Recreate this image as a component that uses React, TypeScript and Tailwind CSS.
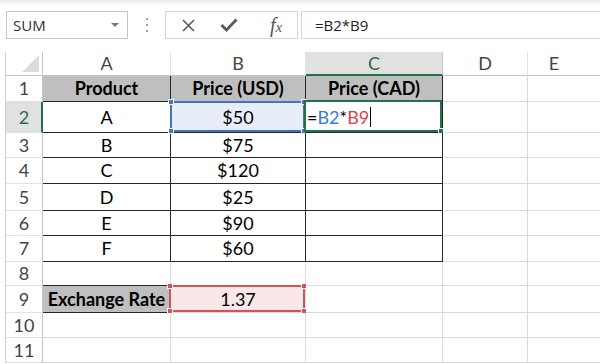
import React from "react";

type RowDef = {
  h: string;
  cells: [React.ReactNode, React.ReactNode, React.ReactNode];
};

function Corner({ color, pos }: { color: string; pos: string }) {
  return <span className={`absolute w-[6px] h-[6px] border border-white ${pos}`} style={{ background: color }} />;
}

function Formula() {
  return (
    <span className="flex items-center h-full pl-[1px] text-[18px] text-black">
      =<span className="text-[#3a78d6]">B2</span>*<span className="text-[#d8434d]">B9</span>
      <span className="ml-[1px] w-px h-[20px] bg-black" />
    </span>
  );
}

const rows: RowDef[] = [
  { h: "h-[26px]", cells: ["Product", "Price (USD)", "Price (CAD)"] },
  { h: "h-[31px]", cells: ["A", "$50", null] },
  { h: "h-[25px]", cells: ["B", "$75", null] },
  { h: "h-[26px]", cells: ["C", "$120", null] },
  { h: "h-[27px]", cells: ["D", "$25", null] },
  { h: "h-[25px]", cells: ["E", "$90", null] },
  { h: "h-[26px]", cells: ["F", "$60", null] },
  { h: "h-[24px]", cells: [null, null, null] },
  { h: "h-[27px]", cells: ["Exchange Rate", "1.37", null] },
  { h: "h-[25px]", cells: [null, null, null] },
  { h: "h-[25px]", cells: [null, null, null] },
];

function Toolbar() {
  return (
    <div className="h-[52px] bg-gradient-to-b from-[#e9e9e9] via-white via-[12%] to-white flex items-start pt-[11px] pl-[6px]">
      <div className="w-[122px] h-[28px] border border-[#c6c6c6] bg-white flex items-center justify-between pl-[6px] pr-[8px] font-['Open_Sans',sans-serif] text-[15px] text-[#333]">
        <span>SUM</span>
        <span className="w-0 h-0 border-l-[4px] border-r-[4px] border-t-[4px] border-l-transparent border-r-transparent border-t-[#777]" />
      </div>
      <div className="w-[37px] h-[28px] flex flex-col items-center justify-center gap-[4px]">
        <span className="w-[2px] h-[2px] bg-[#a0a0a0]" />
        <span className="w-[2px] h-[2px] bg-[#a0a0a0]" />
        <span className="w-[2px] h-[2px] bg-[#a0a0a0]" />
      </div>
      <div className="w-[133px] h-[28px] border border-[#d4d4d4] bg-white flex items-center pl-[16px] gap-[25px]">
        <svg width="13" height="13" viewBox="0 0 13 13">
          <path d="M1 1L12 12M12 1L1 12" stroke="#5a5a5a" strokeWidth="1.6" />
        </svg>
        <svg width="18" height="14" viewBox="0 0 18 14">
          <path d="M1.5 7L6.5 12L16.5 1.5" stroke="#5a5a5a" strokeWidth="2.8" fill="none" />
        </svg>
        <span className="ml-[7px] font-['Liberation_Serif',serif] italic text-[20px] text-[#555] leading-none">
          f<span className="text-[15px]">x</span>
        </span>
      </div>
      <div className="flex-1 ml-[3px] h-[28px] border border-r-0 border-[#d4d4d4] bg-white flex items-center pl-[13px] font-['Open_Sans',sans-serif] text-[15px] text-[#222]">
        =B2*B9
      </div>
    </div>
  );
}

export default function App() {
  return (
    <div className="w-[600px] h-[364px] overflow-hidden bg-white font-['Lato',sans-serif]">
      <Toolbar />
      <div className="ml-[5px] border-l border-[#d0d0d0]">
        {/* column headers */}
        <div className="flex h-[24px] text-[18px] text-[#444]">
          <div className="w-[37px] shrink-0 border-r border-b border-[#c6c6c6] relative">
            <svg className="absolute right-[3px] bottom-[3px]" width="17" height="17" viewBox="0 0 17 17">
              <path d="M17 0V17H0Z" fill="#dcdcdc" />
            </svg>
          </div>
          <div className="w-[128px] shrink-0 border-r border-b border-r-[#e1e1e1] border-b-[#c6c6c6] flex items-center justify-center">A</div>
          <div className="w-[135px] shrink-0 border-r border-b border-r-[#e1e1e1] border-b-[#c6c6c6] flex items-center justify-center">B</div>
          <div className="w-[137px] shrink-0 border-r border-b-2 border-r-[#c6c6c6] border-b-[#217346] bg-[#e1e1e1] text-[#217346] flex items-center justify-center">C</div>
          <div className="w-[85px] shrink-0 border-r border-b border-r-[#e1e1e1] border-b-[#c6c6c6] flex items-center justify-center">D</div>
          <div className="flex-1 border-b border-[#c6c6c6] flex items-center justify-center pr-[20px]">E</div>
        </div>
        {rows.map((row, i) => {
          const n = i + 1;
          const inTable = n <= 7;
          const sel = n === 2;
          const tableB = inTable || n === 8 || n === 9;
          return (
            <div key={n} className={`flex ${row.h} text-[18px]`}>
              <div
                className={`w-[37px] shrink-0 flex items-center justify-center border-b border-b-[#e1e1e1] ${
                  sel ? "bg-[#e1e1e1] text-[#217346] border-r-2 border-r-[#217346] pl-[1px]" : "text-[#444] border-r border-r-[#c6c6c6]"
                }`}
              >
                {n}
              </div>
              {/* A */}
              <div
                className={`w-[128px] shrink-0 flex items-center justify-center border-r border-b text-black ${
                  n === 1 || n === 9 ? "bg-[#bfbfbf] font-bold" : ""
                } ${inTable || n === 9 ? "border-r-[#262626]" : "border-r-[#dadada]"} ${tableB ? "border-b-[#262626]" : "border-b-[#dadada]"}`}
              >
                {row.cells[0]}
              </div>
              {/* B */}
              <div
                className={`relative w-[135px] shrink-0 flex items-center justify-center border-r border-b text-black ${
                  n === 1 ? "bg-[#bfbfbf] font-bold" : sel ? "bg-[#e8eef9]" : n === 9 ? "bg-[#fae8e9] text-[#222]" : ""
                } ${inTable ? "border-r-[#262626] border-b-[#262626]" : "border-r-[#dadada] border-b-[#dadada]"}`}
              >
                {row.cells[1]}
                {sel && (
                  <div className="absolute -left-px -top-px right-0 bottom-0 border-2 border-[#4472c4]">
                    <Corner color="#4472c4" pos="-left-[4px] -top-[4px]" />
                    <Corner color="#4472c4" pos="-right-[4px] -top-[4px]" />
                    <Corner color="#4472c4" pos="-left-[4px] -bottom-[4px]" />
                    <Corner color="#4472c4" pos="-right-[4px] -bottom-[4px]" />
                  </div>
                )}
                {n === 9 && (
                  <div className="absolute -left-[2px] -top-px right-0 bottom-0 border-2 border-[#d4505b]">
                    <Corner color="#d4505b" pos="-left-[4px] -top-[4px]" />
                    <Corner color="#d4505b" pos="-right-[4px] -top-[4px]" />
                    <Corner color="#d4505b" pos="-left-[4px] -bottom-[4px]" />
                    <Corner color="#d4505b" pos="-right-[4px] -bottom-[4px]" />
                  </div>
                )}
              </div>
              {/* C */}
              <div
                className={`relative w-[137px] shrink-0 flex items-center border-r border-b text-black ${
                  n === 1 ? "bg-[#bfbfbf] font-bold justify-center" : "justify-start"
                } ${inTable ? "border-r-[#262626] border-b-[#262626]" : "border-r-[#dadada] border-b-[#dadada]"}`}
              >
                {sel ? <Formula /> : row.cells[2]}
                {sel && (
                  <div className="absolute -left-[2px] -top-[2px] right-0 bottom-0 border-2 border-[#217346]">
                    <span className="absolute -right-[4px] -bottom-[4px] w-[6px] h-[6px] bg-[#217346] border border-white" />
                  </div>
                )}
              </div>
              {/* D */}
              <div className="w-[85px] shrink-0 border-r border-b border-[#dadada]" />
              {/* E */}
              <div className="flex-1 border-b border-[#dadada]" />
            </div>
          );
        })}
      </div>
    </div>
  );
}
